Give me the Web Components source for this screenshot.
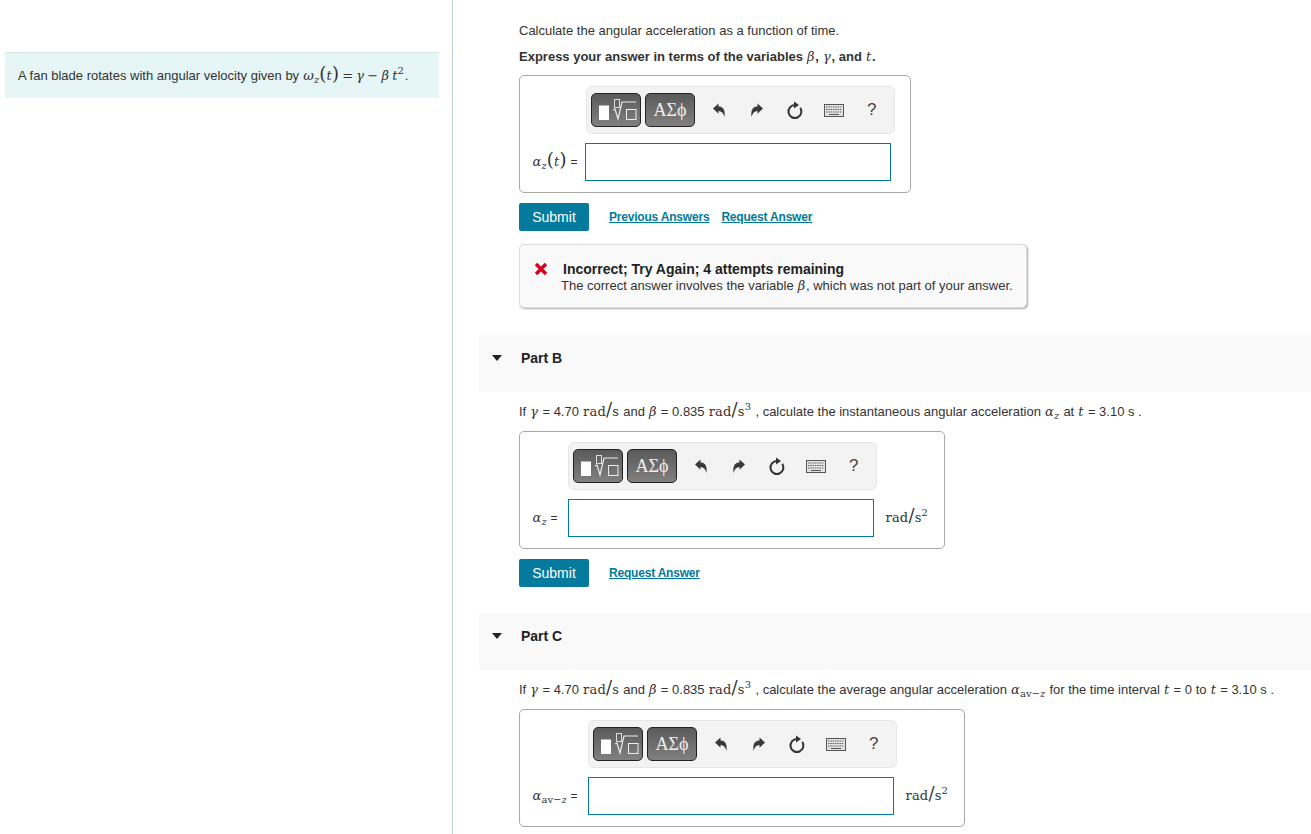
<!DOCTYPE html>
<html>
<head>
<meta charset="utf-8">
<title>Part A</title>
<style>
  html, body { margin: 0; height: 834px; overflow: hidden; background: #fff; }
  body { font: 13px/18px "Liberation Sans", Arial, sans-serif; color: #333; }
  .line { margin: 0; height: 18px; white-space: nowrap; }
  .first { margin-top: 22px; }
  .express { margin-top: 8px; font-weight: bold; }
  .q { margin: 11px 0 10px 40px; }
  .indent { margin-left: 40px; }
</style>
</head>
<body>
<quiz-page>
  <intro-panel slot="aside">A fan blade rotates with angular velocity given by <math-t><i>ω</i><sub><i>z</i></sub><big>(</big><i>t</i><big>)</big><b>=</b><i>γ</i><b>−</b><i>β</i><i class="s">t</i><sup>2</sup></math-t><span>.</span></intro-panel>

  <div class="indent">
    <p class="line first">Calculate the angular acceleration as a function of time.</p>
    <p class="line express">Express your answer in terms of the variables <math-t><i>β</i></math-t>, <math-t><i>γ</i></math-t>, and <math-t><i>t</i></math-t>.</p>
    <answer-box label-width="53" tool-left="54" style="margin-top:9px">
      <math-t slot="label"><i>α</i><sub><i>z</i></sub><big>(</big><i>t</i><big>)</big></math-t>
    </answer-box>
    <action-row style="margin-top:10px">
      <a href="#">Previous Answers</a>
      <a href="#">Request Answer</a>
    </action-row>
    <feedback-box style="margin-top:13px">
      <span slot="title">Incorrect; Try Again; 4 attempts remaining</span>
      The correct answer involves the variable <math-t><i>β</i></math-t>, which was not part of your answer.
    </feedback-box>
  </div>

  <part-header style="margin-top:27px">Part B</part-header>
  <p class="line q">If <math-t><i>γ</i></math-t> = 4.70 <math-t>rad<big>/</big>s</math-t> and <math-t><i>β</i></math-t> = 0.835 <math-t>rad<big>/</big>s<sup>3</sup></math-t> , calculate the instantaneous angular acceleration <math-t><i>α</i><sub><i>z</i></sub></math-t> at <math-t><i>t</i></math-t> = 3.10 s .</p>
  <div class="indent">
    <answer-box label-width="36" tool-left="36">
      <math-t slot="label"><i>α</i><sub><i>z</i></sub></math-t>
      <math-t slot="unit">rad<big>/</big>s<sup>2</sup></math-t>
    </answer-box>
    <action-row style="margin-top:10px">
      <a href="#">Request Answer</a>
    </action-row>
  </div>

  <part-header style="margin-top:26px">Part C</part-header>
  <p class="line q">If <math-t><i>γ</i></math-t> = 4.70 <math-t>rad<big>/</big>s</math-t> and <math-t><i>β</i></math-t> = 0.835 <math-t>rad<big>/</big>s<sup>3</sup></math-t> , calculate the average angular acceleration <math-t><i>α</i><sub>av−<i>z</i></sub></math-t> for the time interval <math-t><i>t</i></math-t> = 0 to <math-t><i>t</i></math-t> = 3.10 s .</p>
  <div class="indent">
    <answer-box label-width="56" tool-left="56">
      <math-t slot="label"><i>α</i><sub>av−<i>z</i></sub></math-t>
      <math-t slot="unit">rad<big>/</big>s<sup>2</sup></math-t>
    </answer-box>
  </div>
</quiz-page>

<script>
class QuizPage extends HTMLElement {
  constructor() {
    super();
    this.attachShadow({ mode: 'open' });
    this.shadowRoot.innerHTML = `
      <style>
        :host { display: flex; height: 834px; }
        .aside { box-sizing: border-box; flex: none; width: 453px; padding: 52px 13px 0 5px; border-right: 1px solid #bcd0e2; }
        .main { flex: 1; min-width: 0; padding-left: 26px; }
      </style>
      <div class="aside"><slot name="aside"></slot></div>
      <div class="main"><slot></slot></div>
    `;
  }
}

class IntroPanel extends HTMLElement {
  constructor() {
    super();
    this.attachShadow({ mode: 'open' });
    this.shadowRoot.innerHTML = `
      <style>
        :host { display: flex; align-items: center; box-sizing: border-box; height: 46px; padding-left: 13px; background: #e6f5f6; border-top: 1px solid #dde6e6; white-space: nowrap; }
      </style>
      <div><slot></slot></div>
    `;
  }
}

// no whitespace around the slot here, it would show up as a space after the math
class MathT extends HTMLElement {
  constructor() {
    super();
    this.attachShadow({ mode: 'open' });
    this.shadowRoot.innerHTML = `<style>
        :host { display: inline; margin: 0 .5px; font: normal 13px/0 "DejaVu Serif", "Liberation Serif", serif; letter-spacing: .2px; color: #333; white-space: nowrap; }
        ::slotted(i) { font-style: italic; }
        ::slotted(i.s) { margin-left: 3px; }
        ::slotted(b) { font-weight: normal; margin: 0 3px; }
        ::slotted(big) { font-size: 18px; font-weight: normal; line-height: 0; }
        ::slotted(sub) { font-size: 10px; line-height: 0; vertical-align: -3px; letter-spacing: 0; }
        ::slotted(sup) { font-size: 10px; font-weight: normal; line-height: 0; vertical-align: 6px; }
      </style><slot></slot>`;
  }
}

class MathToolbar extends HTMLElement {
  constructor() {
    super();
    this.attachShadow({ mode: 'open' });
    this.shadowRoot.innerHTML = `
      <style>
        :host { display: flex; align-items: center; box-sizing: border-box; width: 309px; height: 48px; padding-left: 4px; background: #f3f3f3; border: 1px solid #e6e6e6; border-radius: 6px; }
        .btn { display: flex; align-items: center; justify-content: center; box-sizing: border-box; width: 50px; height: 34px; margin-right: 4px; border: 1px solid #222; border-radius: 5px; background: linear-gradient(#5a5a5a, #808080); color: #eee; font: 18px "Liberation Serif", serif; }
        .slot { display: flex; align-items: center; justify-content: center; width: 38.200px; height: 34px; color: #444; font-size: 17px; }
        .first { margin-left: 1px; }
        svg { display: block; }
      </style>
      <div class="btn">
        <svg width="48" height="32" viewBox="0 0 48 32" fill="none">
          <rect x="7" y="11.500" width="10" height="14.500" fill="#fff"/>
          <rect x="22.500" y="5.500" width="5" height="8" stroke="#ddd"/>
          <path d="M21 16l2-1 3 10 4-17h14" stroke="#eee" stroke-width="1.200"/>
          <rect x="34.500" y="15.500" width="9.500" height="10" stroke="#eee"/>
        </svg>
      </div>
      <div class="btn">ΑΣϕ</div>
      <div class="slot first">
        <svg width="14" height="16" viewBox="0 0 14 16"><path d="M1 6.500L6.500 1.500V4.500C10.500 4.500 13.500 7 12.500 15C11.500 11 9.500 9 6.500 9V11.800Z" fill="#3a3a3a"/></svg>
      </div>
      <div class="slot">
        <svg width="14" height="16" viewBox="0 0 14 16"><path d="M13 6.500L7.500 1.500V4.500C3.500 4.500 .5 7 1.500 15C2.500 11 4.500 9 7.500 9V11.800Z" fill="#3a3a3a"/></svg>
      </div>
      <div class="slot">
        <svg width="18" height="20" viewBox="0 0 18 20" fill="none"><path d="M14.300 7.800A6.500 6.500 0 1 1 9 5" stroke="#333" stroke-width="2"/><path d="M8 1.500L13 5L8 8.500Z" fill="#333"/></svg>
      </div>
      <div class="slot">
        <svg width="20" height="13" viewBox="0 0 20 13"><rect x=".5" y=".5" width="19" height="12" fill="#e2e2e2" stroke="#555"/><path d="M2 3h16M2 5.500h16M2 8h16" stroke="#666" stroke-dasharray="1.500 .8"/><path d="M5 10.500h10" stroke="#555"/></svg>
      </div>
      <div class="slot">?</div>
    `;
  }
}

class AnswerBox extends HTMLElement {
  constructor() {
    super();
    this.attachShadow({ mode: 'open' });
  }

  connectedCallback() {
    const w = Number(this.getAttribute('label-width'));
    const left = Number(this.getAttribute('tool-left'));
    this.shadowRoot.innerHTML = `
      <style>
        :host { display: block; box-sizing: border-box; width: fit-content; height: 118px; padding: 10px 19px 0 12px; border: 1px solid #aaa; border-radius: 5px; }
        .tools { margin-left: ${left}px; margin-right: -30px; }
        .row { display: flex; align-items: center; margin-top: 9px; }
        .label { box-sizing: border-box; flex: none; width: ${w}px; white-space: nowrap; font-size: 12px; }
        .input { box-sizing: border-box; flex: none; width: 306px; height: 38px; border: 1px solid #007c9c; }
        .unit { flex: none; white-space: nowrap; }
        .unit.on { width: 40px; margin-left: 11px; }
      </style>
      <math-toolbar class="tools"></math-toolbar>
      <div class="row">
        <div class="label"><slot name="label"></slot> =</div>
        <div class="input"></div>
        <div class="unit ${this.querySelector('[slot=unit]') ? 'on' : ''}"><slot name="unit"></slot></div>
      </div>
    `;
  }
}

class ActionRow extends HTMLElement {
  constructor() {
    super();
    this.attachShadow({ mode: 'open' });
    this.shadowRoot.innerHTML = `
      <style>
        :host { display: flex; align-items: center; height: 28px; }
        button { box-sizing: border-box; width: 70px; height: 28px; margin-right: 20px; padding: 0; border: 0; border-radius: 2px; background: #047b9c; color: #fff; font: 14px "Liberation Sans", Arial, sans-serif; }
        .links { display: flex; gap: 12px; font-size: 12px; }
        ::slotted(a) { color: #007a9a; text-decoration: underline; font-weight: bold; letter-spacing: -.2px; }
      </style>
      <button>Submit</button>
      <div class="links"><slot></slot></div>
    `;
  }
}

class FeedbackBox extends HTMLElement {
  constructor() {
    super();
    this.attachShadow({ mode: 'open' });
    this.shadowRoot.innerHTML = `
      <style>
        :host { display: block; box-sizing: border-box; width: 508px; height: 64px; padding: 16px 0 0 14px; background: #f9f9f9; border: 1px solid #ddd; border-radius: 5px; box-shadow: 1px 1px 2px #aaa; }
        .head { display: flex; align-items: center; height: 16px; }
        svg { flex: none; margin-right: 15px; }
        .title { font-weight: bold; font-size: 14px; color: #222; }
        .body { margin: 1px 0 0 27px; line-height: 16px; white-space: nowrap; }
      </style>
      <div class="head">
        <svg width="14" height="14" viewBox="0 0 14 14"><path d="M2 2l10 10M12 2L2 12" stroke="#d9001e" stroke-width="3.400"/></svg>
        <div class="title"><slot name="title"></slot></div>
      </div>
      <div class="body"><slot></slot></div>
    `;
  }
}

class PartHeader extends HTMLElement {
  constructor() {
    super();
    this.attachShadow({ mode: 'open' });
    this.shadowRoot.innerHTML = `
      <style>
        :host { display: flex; align-items: center; box-sizing: border-box; height: 57px; padding: 0 0 12px 13px; background: #f9f9f9; font-weight: bold; font-size: 14px; color: #222; }
        .arrow { width: 0; height: 0; margin-right: 19px; border: 5.500px solid transparent; border-top: 6px solid #222; border-bottom: 0; }
      </style>
      <div class="arrow"></div>
      <div><slot></slot></div>
    `;
  }
}

customElements.define('quiz-page', QuizPage);
customElements.define('intro-panel', IntroPanel);
customElements.define('math-t', MathT);
customElements.define('math-toolbar', MathToolbar);
customElements.define('answer-box', AnswerBox);
customElements.define('action-row', ActionRow);
customElements.define('feedback-box', FeedbackBox);
customElements.define('part-header', PartHeader);
</script>
</body>
</html>
